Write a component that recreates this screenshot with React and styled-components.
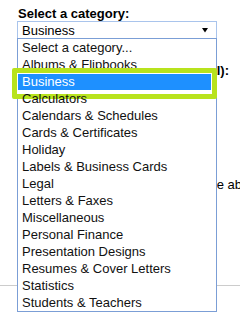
import styled, { createGlobalStyle } from "styled-components";

const categories = [
  "Select a category...",
  "Albums & Flipbooks",
  "Business",
  "Calculators",
  "Calendars & Schedules",
  "Cards & Certificates",
  "Holiday",
  "Labels & Business Cards",
  "Legal",
  "Letters & Faxes",
  "Miscellaneous",
  "Personal Finance",
  "Presentation Designs",
  "Resumes & Cover Letters",
  "Statistics",
  "Students & Teachers",
];

const selected = "Business";

export default function App() {
  return (
    <Page>
      <GlobalStyle />
      <Content>
        <Label>Select a category:</Label>
        <SelectWrap>
          <SelectBox>
            <span>{selected}</span>
            <svg width="6" height="5" viewBox="0 0 6 5">
              <path d="M0 0 H6 L3 4.5 Z" fill="#000" />
            </svg>
          </SelectBox>
          <Dropdown>
            {categories.map((c) => (
              <Option key={c} $active={c === selected}>
                {c}
              </Option>
            ))}
          </Dropdown>
        </SelectWrap>
        <SideLabel>Keywords (optional):</SideLabel>
        <Note>Choose the one above</Note>
      </Content>
      <Rule />
    </Page>
  );
}

const GlobalStyle = createGlobalStyle`
  body {
    margin: 0;
    background: #ffffff;
    font-family: "Liberation Sans", Arial, sans-serif;
    overflow: hidden;
  }
`;

const Page = styled.div`
  width: 240px;
  height: 322px;
  overflow: hidden;
  padding-top: 6px;
  box-sizing: border-box;
`;

const Content = styled.div`
  padding-left: 17px;
`;

const Label = styled.div`
  font-size: 13px;
  font-weight: 700;
  line-height: 15px;
  color: #000;
  padding-left: 1px;
`;

const SelectWrap = styled.div`
  position: relative;
  width: 200px;
  z-index: 2;
`;

const SelectBox = styled.div`
  height: 17px;
  box-sizing: border-box;
  border: 1px solid #a9c4ec;
  border-bottom: none;
  display: flex;
  align-items: center;
  justify-content: space-between;
  padding: 0 8px 0 4px;
  font-size: 13px;
  color: #000;
  svg {
    margin-top: 1px;
  }
`;

const Dropdown = styled.ul`
  position: absolute;
  top: 100%;
  left: 0;
  width: 200px;
  box-sizing: border-box;
  margin: 0;
  padding: 0;
  list-style: none;
  background: #ffffff;
  border: 1px solid #7b9ed6;
`;

const Option = styled.li`
  position: relative;
  height: 17px;
  line-height: 17px;
  padding-left: 4px;
  font-size: 13px;
  white-space: nowrap;
  color: ${(p) => (p.$active ? "#ffffff" : "#111111")};
  background: ${(p) => (p.$active ? "#1e90ff" : "transparent")};
  ${(p) =>
    p.$active &&
    `
    &::after {
      content: "";
      position: absolute;
      left: -6px;
      right: -1px;
      top: -5px;
      bottom: -9px;
      border: 5px solid #b8e31d;
      border-radius: 2px;
      box-shadow: inset 0 0 0 1px #ffffff;
    }
  `}
`;

const SideLabel = styled.div`
  width: 212px;
  display: flex;
  justify-content: flex-end;
  margin-top: 25px;
  font-size: 13px;
  font-weight: 700;
  line-height: 15px;
  white-space: nowrap;
  color: #000;
`;

const Note = styled.div`
  width: 246px;
  display: flex;
  justify-content: flex-end;
  margin-top: 99px;
  font-size: 13px;
  line-height: 15px;
  white-space: nowrap;
  color: #000;
`;

const Rule = styled.hr`
  margin: 93px 0 0;
  border: none;
  border-top: 1px solid #cccccc;
`;
